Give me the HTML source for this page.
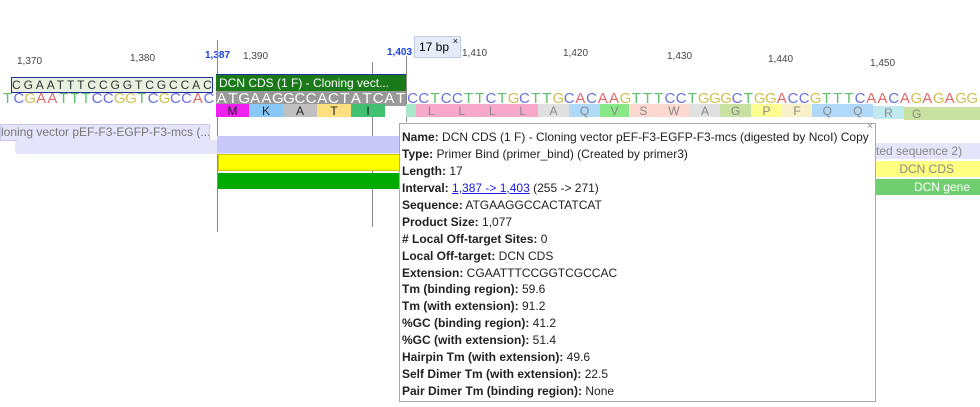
<!DOCTYPE html><html><head><style>
body{margin:0;width:980px;height:407px;overflow:hidden;background:#fff;font-family:"Liberation Sans",sans-serif;position:relative}
.a{position:absolute}
.rl{font-size:10px;color:#444}
.seq{font-size:15px;white-space:nowrap}
.seq span{display:inline-block;width:11.2px;text-align:center}
.A{color:#e06868}.C{color:#6a70e0}.G{color:#d0c050}.T{color:#60c070}
.aa{position:absolute;top:104px;height:13px;font-size:12px;text-align:center;line-height:14px;color:#888}
.tip{left:399px;top:123px;width:477px;height:279px;border:1px solid #aaa;background:#fff;font-size:12px;color:#222;box-sizing:border-box;padding:5px 0 0 2px}
.tip div{height:16.95px;line-height:17px;white-space:nowrap}
</style></head><body>
<div class="a rl" style="left:17px;top:56px">1,370</div>
<div class="a rl" style="left:130px;top:53px">1,380</div>
<div class="a rl" style="left:205px;top:50px;color:#1a3ee0;font-weight:bold">1,387</div>
<div class="a rl" style="left:243px;top:51px">1,390</div>
<div class="a rl" style="left:387px;top:47px;color:#1a3ee0;font-weight:bold">1,403</div>
<div class="a rl" style="left:462px;top:48px">1,410</div>
<div class="a rl" style="left:563px;top:48px">1,420</div>
<div class="a rl" style="left:667px;top:51px">1,430</div>
<div class="a rl" style="left:768px;top:54px">1,440</div>
<div class="a rl" style="left:870px;top:58px">1,450</div>
<div class="a" style="left:414px;top:36px;width:45px;height:20px;background:#e4ecfa;border:1px solid #c0cce0;font-size:12px;line-height:20px;text-indent:4px">17 bp<span style="position:absolute;right:2px;top:-6px;font-size:9px">×</span></div>
<div class="a" style="left:217px;top:40px;width:1px;height:192px;background:#888"></div>
<div class="a" style="left:372px;top:62px;width:1px;height:165px;background:#888"></div>
<div class="a" style="left:406px;top:56px;width:1px;height:66px;background:#888"></div>
<div class="a" style="left:11px;top:77px;width:200px;height:14px;background:#e8f0e0;border:1px solid #2030a0;font-size:12px;letter-spacing:2.9px;line-height:14px;color:#333;white-space:nowrap;overflow:hidden">CGAATTTCCGGTCGCCAC</div>
<div class="a" style="left:216px;top:74px;width:190px;height:16px;background:#1a7a1a;border-top:1px solid #2030a0;color:#fff;font-size:12px;line-height:16px;text-indent:3px;white-space:nowrap">DCN CDS (1 F) - Cloning vect...</div>
<div class="a" style="left:216px;top:91px;width:190px;height:15px;background:#999"></div>
<div class="a seq" style="left:2px;top:90px" id="l"></div>
<div class="a seq" style="left:216px;top:90px;color:#fff" id="m"></div>
<div class="a seq" style="left:407px;top:90px" id="r"></div>
<div class="aa" style="left:216px;width:33px;background:#f020f0;color:#222">M</div>
<div class="aa" style="left:249px;width:34px;background:#88c8f8;color:#222">K</div>
<div class="aa" style="left:283px;width:34px;background:#c0c0c0;color:#222">A</div>
<div class="aa" style="left:317px;width:34px;background:#fce080;color:#222">T</div>
<div class="aa" style="left:351px;width:34px;background:#40c070;color:#222">I</div>
<div class="aa" style="left:406px;width:10px;background:#a8e8c8"></div>
<div class="aa" style="left:416px;width:122px;background:#f8a8c8;display:flex;justify-content:space-around"><span>L</span><span>L</span><span>L</span><span>L</span></div>
<div class="aa" style="left:538px;width:31px;background:#e0e0e0">A</div>
<div class="aa" style="left:569px;width:31px;background:#b0d8f8">Q</div>
<div class="aa" style="left:600px;width:29px;background:#88e888">V</div>
<div class="aa" style="left:629px;width:61px;background:#fcd8d0;display:flex;justify-content:space-around"><span>S</span><span>W</span></div>
<div class="aa" style="left:690px;width:30px;background:#e0e0e0">A</div>
<div class="aa" style="left:720px;width:31px;background:#c8e0a0">G</div>
<div class="aa" style="left:751px;width:31px;background:#fcfc90">P</div>
<div class="aa" style="left:782px;width:30px;background:#f8f0c8">F</div>
<div class="aa" style="left:812px;width:61px;background:#b0d8f8;display:flex;justify-content:space-around"><span>Q</span><span>Q</span></div>
<div class="aa" style="left:873px;width:31px;background:#c0eaf0;top:106px">R</div>
<div class="aa" style="left:904px;width:76px;background:#c8e0a0;top:107px;text-align:left;padding-left:8px">G</div>
<div class="a" style="left:0;top:124px;width:208px;height:15px;background:#e4e4fa;border:1px solid #c8c8e8;font-size:12px;color:#777;line-height:15px;white-space:nowrap;overflow:hidden">loning vector pEF-F3-EGFP-F3-mcs (...</div>
<div class="a" style="left:15px;top:140px;width:385px;height:14px;background:#e4e4fa;border-radius:3px"></div>
<div class="a" style="left:217px;top:136px;width:183px;height:17px;background:#c8c8f8"></div>
<div class="a" style="left:218px;top:154px;width:182px;height:15px;background:#ffff00;border:1px solid #cc0"></div>
<div class="a" style="left:218px;top:173px;width:182px;height:16px;background:#00aa00"></div>
<div class="a" style="left:876px;top:143px;width:104px;height:16px;background:#e4e4fa;font-size:12px;color:#888;line-height:16px">ted sequence 2)</div>
<div class="a" style="left:876px;top:161px;width:104px;height:16px;background:#ffff80;font-size:12px;color:#888;line-height:16px;text-align:right;padding-right:26px;box-sizing:border-box">DCN CDS</div>
<div class="a" style="left:876px;top:179px;width:104px;height:16px;background:#70d070;font-size:12px;color:#fff;line-height:16px;text-align:right;padding-right:10px;box-sizing:border-box">DCN gene</div>
<div class="a tip">
<span style="position:absolute;right:2px;top:-3px;font-size:10px;color:#888">×</span>
<div><b>Name:</b> DCN CDS (1 F) - Cloning vector pEF-F3-EGFP-F3-mcs (digested by NcoI) Copy</div>
<div><b>Type:</b> Primer Bind (primer_bind) (Created by primer3)</div>
<div><b>Length:</b> 17</div>
<div><b>Interval:</b> <span style="color:#1a1ae0;text-decoration:underline">1,387 -&gt; 1,403</span> (255 -&gt; 271)</div>
<div><b>Sequence:</b> ATGAAGGCCACTATCAT</div>
<div><b>Product Size:</b> 1,077</div>
<div><b># Local Off-target Sites:</b> 0</div>
<div><b>Local Off-target:</b> DCN CDS</div>
<div><b>Extension:</b> CGAATTTCCGGTCGCCAC</div>
<div><b>Tm (binding region):</b> 59.6</div>
<div><b>Tm (with extension):</b> 91.2</div>
<div><b>%GC (binding region):</b> 41.2</div>
<div><b>%GC (with extension):</b> 51.4</div>
<div><b>Hairpin Tm (with extension):</b> 49.6</div>
<div><b>Self Dimer Tm (with extension):</b> 22.5</div>
<div><b>Pair Dimer Tm (binding region):</b> None</div>
</div>
<script>
function f(id,s,col){var h="";for(var c of s)h+='<span class="'+(col?c:'')+'">'+c+'</span>';document.getElementById(id).innerHTML=h;}
f('l',"TCGAATTTCCGGTCGCCAC",1);
f('m',"ATGAAGGCCACTATCAT",0);
f('r',"CCTCCTTCTGCTTGCACAAGTTTCCTGGGCTGGACCGTTTCAACAGAGAGG",1);
</script>
</body></html>
